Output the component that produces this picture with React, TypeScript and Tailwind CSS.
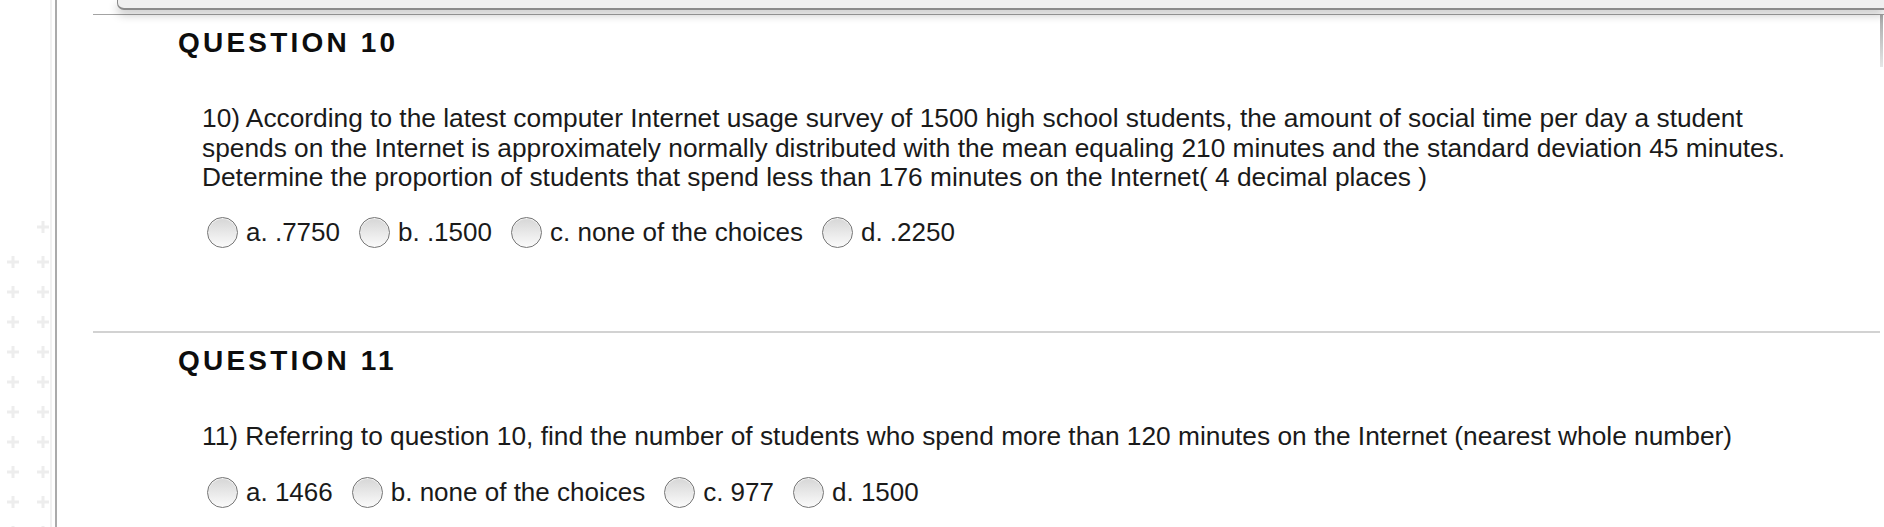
import React from 'react';

type Question = {
    number: number;
    lines: string[];
    options: string[];
};

const questions: Question[] = [
    {
        number: 10,
        lines: [
            '10) According to the latest computer Internet usage survey of 1500 high school students, the amount of social time per day a student',
            'spends on the Internet is approximately normally distributed with the mean equaling 210 minutes and the standard deviation 45 minutes.',
            'Determine the proportion of students that spend less than 176 minutes on the Internet( 4 decimal places )',
        ],
        options: ['a. .7750', 'b. .1500', 'c. none of the choices', 'd. .2250'],
    },
    {
        number: 11,
        lines: [
            '11) Referring to question 10, find the number of students who spend more than 120 minutes on the Internet (nearest whole number)',
        ],
        options: ['a. 1466', 'b. none of the choices', 'c. 977', 'd. 1500'],
    },
];

const Plus = () => (
    <svg width="12" height="12" viewBox="0 0 12 12" className="block">
        <path d="M6 0v12M0 6h12" stroke="#ededed" strokeWidth="3" />
    </svg>
);

const Radio = ({ label }: { label: string }) => (
    <label className="flex items-center">
        <span className="w-[31px] h-[31px] rounded-full border-[1.5px] border-[#767676] bg-linear-to-b from-[#d6d6d6] to-[#fbfbfb] shadow-[inset_0_1px_1px_rgba(255,255,255,0.8)]" />
        <span className="ml-[8px] mr-[19px] whitespace-nowrap">{label}</span>
    </label>
);

function QuestionBlock({ q, first }: { q: Question; first: boolean }) {
    return (
        <div className={first ? 'border-t border-[#a3a3a3] pb-[79px]' : 'border-t-2 border-[#d2d2d2]'}>
            <h2 className="pl-[85px] mt-[14px] text-[28px] leading-[28px] font-bold tracking-[3.2px] text-[#0d0d0d]">
                QUESTION {q.number}
            </h2>
            <div className="pl-[109px] mt-[47px] text-[26.3px] leading-[29.5px] text-[#1a1a1a]">
                {q.lines.map((line) => (
                    <div key={line} className="whitespace-nowrap">{line}</div>
                ))}
            </div>
            <div className={`flex items-center pl-[114px] text-[26px] text-[#1a1a1a] ${first ? 'mt-[20px]' : 'mt-[22px]'}`}>
                {q.options.map((opt) => (
                    <Radio key={opt} label={opt} />
                ))}
            </div>
        </div>
    );
}

export default function App() {
    const rows = Array.from({ length: 10 });
    return (
        <div className="w-[1884px] h-[527px] overflow-hidden bg-white flex font-['Liberation_Sans',Arial,sans-serif]">
            {/* left gutter with faint crosses */}
            <div className="w-[50px] shrink-0 pt-[221px]">
                <div className="flex pl-[37px]">
                    <Plus />
                </div>
                <div className="flex flex-col gap-[18px] mt-[23px]">
                    {rows.map((_, i) => (
                        <div key={i} className="flex gap-[18px] pl-[7px]">
                            <Plus />
                            <Plus />
                        </div>
                    ))}
                </div>
            </div>
            <div className="w-[2px] shrink-0 bg-[#f1f1f1]" />
            <div className="w-[3px] shrink-0" />
            <div className="w-[2px] shrink-0 bg-[#ababab]" />

            <div className="flex-1 flex flex-col">
                {/* top panel edge */}
                <div className="relative z-10 ml-[60px] h-[10px] bg-[#efefef] border-b-2 border-l border-[#8a8a8a] rounded-bl-[7px] shadow-[0_5px_10px_rgba(0,0,0,0.22)]" />
                <div className="ml-[36px] mt-[4px] flex">
                    <div className="flex-1">
                        {questions.map((q, i) => (
                            <QuestionBlock key={q.number} q={q} first={i === 0} />
                        ))}
                    </div>
                    <div className="w-[4px] shrink-0 border-t border-[#a3a3a3]">
                        <div className="w-[3px] h-[52px] bg-linear-to-b from-[#a9a9a9] to-[#e6e6e6]" />
                    </div>
                </div>
            </div>
        </div>
    );
}
